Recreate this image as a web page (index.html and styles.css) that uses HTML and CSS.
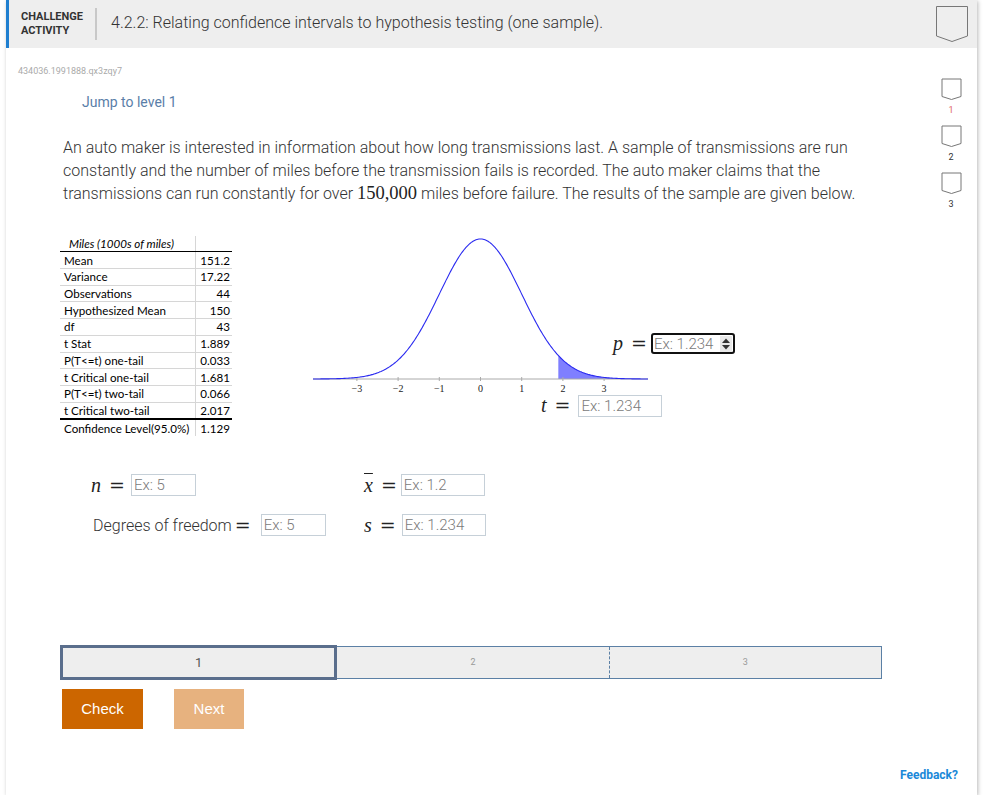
FILE: index.html
```html
<!DOCTYPE html>
<html lang="en">
<head>
    <meta charset="UTF-8">
    <meta name="viewport" content="width=device-width, initial-scale=1.0">
    <title>Challenge Activity 4.2.2</title>
    <link rel="stylesheet" href="styles.css">
</head>
<body>
    <div class="activity">
        <div class="activity-header">
            <div class="activity-label">CHALLENGE<br>ACTIVITY</div>
            <div class="activity-title">4.2.2: Relating confidence intervals to hypothesis testing (one sample).</div>
            <svg class="chevron chevron-big" width="34" height="38" viewBox="0 0 34 38">
                <path d="M1.5 1.5 H32.5 V31 L17 36.5 L1.5 31 Z"/>
            </svg>
        </div>

        <div class="activity-body">
            <div class="main">
                <div class="activity-id">434036.1991888.qx3zqy7</div>
                <div class="jump">Jump to level 1</div>

                <p class="prompt">An auto maker is interested in information about how long transmissions last. A sample of transmissions are run constantly and the number of miles before the transmission fails is recorded. The auto maker claims that the transmissions can run constantly for over <span class="num">150,000</span> miles before failure. The results of the sample are given below.</p>

                <div class="data">
                    <table class="stats">
                        <tr class="head"><td class="title">Miles (1000s of miles)</td><td></td></tr>
                        <tr><td>Mean</td><td>151.2</td></tr>
                        <tr><td>Variance</td><td>17.22</td></tr>
                        <tr><td>Observations</td><td>44</td></tr>
                        <tr><td>Hypothesized Mean</td><td>150</td></tr>
                        <tr><td>df</td><td>43</td></tr>
                        <tr><td>t Stat</td><td>1.889</td></tr>
                        <tr><td>P(T&lt;=t) one-tail</td><td>0.033</td></tr>
                        <tr><td>t Critical one-tail</td><td>1.681</td></tr>
                        <tr><td>P(T&lt;=t) two-tail</td><td>0.066</td></tr>
                        <tr class="thick"><td>t Critical two-tail</td><td>2.017</td></tr>
                        <tr class="last"><td>Confidence Level(95.0%)</td><td>1.129</td></tr>
                    </table>

                    <div class="graph">
                        <div class="graph-top">
                            <svg id="tdist" width="335" height="163" viewBox="0 0 335 163">
                                <path id="shade" class="shade"/>
                                <line class="axis" x1="0" y1="146" x2="335" y2="146"/>
                                <g class="ticks">
                                    <line x1="43.9" y1="144" x2="43.9" y2="148"/>
                                    <line x1="85.1" y1="144" x2="85.1" y2="148"/>
                                    <line x1="126.3" y1="144" x2="126.3" y2="148"/>
                                    <line x1="167.5" y1="144" x2="167.5" y2="148"/>
                                    <line x1="208.7" y1="144" x2="208.7" y2="148"/>
                                    <line x1="249.9" y1="144" x2="249.9" y2="148"/>
                                    <line x1="291.1" y1="144" x2="291.1" y2="148"/>
                                </g>
                                <path id="curve" class="curve"/>
                                <g class="tick-labels">
                                    <text x="43.9" y="159">−3</text>
                                    <text x="85.1" y="159">−2</text>
                                    <text x="126.3" y="159">−1</text>
                                    <text x="167.5" y="159">0</text>
                                    <text x="208.7" y="159">1</text>
                                    <text x="249.9" y="159">2</text>
                                    <text x="291.1" y="159">3</text>
                                </g>
                            </svg>
                            <div class="field p-field">
                                <span class="math"><i>p</i><span class="eq">=</span></span>
                                <span class="spin-box">
                                    <input type="text" class="spin-input" placeholder="Ex: 1.234">
                                    <svg class="spinner" width="12" height="16" viewBox="0 0 12 16">
                                        <path d="M2 7 L6 2.5 L10 7 Z"/>
                                        <path d="M2 9 L6 13.5 L10 9 Z"/>
                                    </svg>
                                </span>
                            </div>
                        </div>
                        <div class="field t-field">
                            <span class="math"><i>t</i><span class="eq">=</span></span>
                            <input type="text" class="answer wide" placeholder="Ex: 1.234">
                        </div>
                    </div>
                </div>

                <div class="fields">
                    <div class="field-col">
                        <div class="field n-field">
                            <span class="math"><i>n</i><span class="eq">=</span></span>
                            <input type="text" class="answer" placeholder="Ex: 5">
                        </div>
                        <div class="field df-field">
                            <span class="text-label">Degrees of freedom</span><span class="math"><span class="eq">=</span></span>
                            <input type="text" class="answer" placeholder="Ex: 5">
                        </div>
                    </div>
                    <div class="field-col">
                        <div class="field x-field">
                            <span class="math"><i class="bar">x</i><span class="eq">=</span></span>
                            <input type="text" class="answer wide" placeholder="Ex: 1.2">
                        </div>
                        <div class="field s-field">
                            <span class="math"><i>s</i><span class="eq">=</span></span>
                            <input type="text" class="answer wide" placeholder="Ex: 1.234">
                        </div>
                    </div>
                </div>

                <div class="levels">
                    <div class="level current">1</div>
                    <div class="level">2</div>
                    <div class="level dashed">3</div>
                </div>

                <div class="buttons">
                    <button type="button" class="btn check">Check</button>
                    <button type="button" class="btn next">Next</button>
                </div>
            </div>

            <div class="sidebar">
                <div class="step">
                    <svg class="chevron" width="21" height="23" viewBox="0 0 21 23">
                        <path d="M1 1 H20 V18.5 L10.5 21.5 L1 18.5 Z"/>
                    </svg>
                    <span class="step-num active">1</span>
                </div>
                <div class="step">
                    <svg class="chevron" width="21" height="23" viewBox="0 0 21 23">
                        <path d="M1 1 H20 V18.5 L10.5 21.5 L1 18.5 Z"/>
                    </svg>
                    <span class="step-num">2</span>
                </div>
                <div class="step">
                    <svg class="chevron" width="21" height="23" viewBox="0 0 21 23">
                        <path d="M1 1 H20 V18.5 L10.5 21.5 L1 18.5 Z"/>
                    </svg>
                    <span class="step-num">3</span>
                </div>
            </div>
        </div>

        <div class="feedback">Feedback?</div>
    </div>

    <script>
        // curve of the t distribution (df = 43, close to normal)
        const cx = 167.5, sx = 41.2, axisY = 146, sy = 351;

        function pdf(t) {
            return Math.exp(-t * t / 2) / Math.sqrt(2 * Math.PI);
        }

        function yAt(px) {
            return axisY - pdf((px - cx) / sx) * sy;
        }

        let d = '';
        for (let px = 0; px <= 335; px++) {
            d += (px ? 'L' : 'M') + px + ' ' + yAt(px).toFixed(2);
        }
        document.getElementById('curve').setAttribute('d', d);

        const start = cx + 1.889 * sx;
        let s = 'M' + start.toFixed(2) + ' ' + axisY + ' L' + start.toFixed(2) + ' ' + yAt(start).toFixed(2);
        for (let px = Math.ceil(start); px <= 335; px++) {
            s += ' L' + px + ' ' + yAt(px).toFixed(2);
        }
        s += ' L335 ' + axisY + ' Z';
        document.getElementById('shade').setAttribute('d', s);
    </script>
</body>
</html>
```

FILE: styles.css
```css
body {
    margin: 0;
    font-family: Roboto, "Liberation Sans", sans-serif;
    color: #333;
    background: #fff;
}
.activity {
    display: flex;
    flex-direction: column;
    height: 795px;
    margin: 0 8px 0 6px;
    box-shadow: 1px 1px 4px rgba(0, 0, 0, 0.28);
}
.activity-header {
    display: flex;
    align-items: center;
    height: 48px;
    padding-left: 12px;
    background: #eeeeee;
    border-left: 3px solid #1f7fd0;
}
.activity-label {
    font-size: 11px;
    font-weight: 700;
    line-height: 14px;
    color: #333;
}
.activity-title {
    margin-left: 12px;
    padding-left: 14px;
    border-left: 2px solid #c8c8c8;
    height: 32px;
    line-height: 30px;
    font-size: 16px;
    font-weight: 300;
    color: #333;
}
.chevron path {
    fill: none;
    stroke: #777;
    stroke-width: 1;
}
.chevron-big {
    margin-left: auto;
    margin-right: 8px;
}
.activity-body {
    flex: 1;
    display: grid;
    grid-template-columns: 1fr 52px;
}
.main {
    padding-left: 12px;
}
.activity-id {
    margin-top: 18px;
    font-size: 9px;
    line-height: 11px;
    color: #aaa;
}
.jump {
    margin: 17px 0 0 64px;
    font-size: 14px;
    line-height: 17px;
    color: #5a7ea8;
}
.prompt {
    width: 820px;
    margin: 26px 0 0 45px;
    font-size: 16px;
    font-weight: 300;
    line-height: 22.8px;
    color: #333;
}
.num {
    font-family: "Liberation Serif", serif;
    font-size: 18.5px;
    font-weight: 400;
    line-height: 1;
    color: #222;
}
.data {
    display: flex;
    align-items: flex-start;
    gap: 81px;
    margin: 28px 0 0 42px;
}
.stats {
    width: 172px;
    margin-top: 3px;
    border-collapse: collapse;
    font-family: Lato, "Open Sans", sans-serif;
    font-size: 11.6px;
    color: #000;
}
.stats td {
    height: 15.7px;
    padding: 0 2px 0 4px;
    line-height: 15px;
    border-bottom: 1px solid #d6d6d6;
    white-space: nowrap;
}
.stats td:last-child {
    width: 30px;
    text-align: right;
    border-left: 1px solid #d6d6d6;
}
.stats .head td {
    height: 15px;
    border-bottom: 1px solid #000;
}
.stats .title {
    padding-left: 9px;
    font-style: italic;
}
.stats .thick td {
    border-bottom: 2px solid #000;
}
.stats .last td {
    border-bottom: none;
}
.graph {
    display: flex;
    flex-direction: column;
}
.graph-top {
    display: flex;
    align-items: flex-end;
}
.axis,
.ticks line {
    stroke: #aaa;
    stroke-width: 1;
}
.curve {
    fill: none;
    stroke: #2b2bf0;
    stroke-width: 1.1;
}
.shade {
    fill: #7f7fff;
}
.tick-labels text {
    font-family: "Liberation Serif", serif;
    font-size: 10px;
    text-anchor: middle;
    fill: #222;
}
.field {
    display: flex;
    align-items: center;
}
.math {
    font-family: "Liberation Serif", serif;
    font-size: 20px;
    color: #222;
}
.math i {
    font-style: italic;
}
.eq {
    margin: 0 3px 0 8px;
    font-family: "DejaVu Serif", serif;
    font-size: 19px;
    font-style: normal;
}
.bar {
    text-decoration: overline;
    text-decoration-thickness: 1px;
}
.p-field {
    margin: 0 0 41px -35px;
}
.p-field .eq {
    margin-right: 4px;
}
.spin-box {
    display: flex;
    align-items: center;
    width: 84px;
    height: 21px;
    box-sizing: border-box;
    border: 2px solid #111;
    border-radius: 3px;
}
.spin-input {
    width: 66px;
    padding: 0 0 0 1px;
    border: none;
    outline: none;
    font-family: Roboto, sans-serif;
    font-size: 15px;
    font-weight: 300;
    background: transparent;
}
.spinner {
    background: #e8e8e8;
}
.spinner path {
    fill: #333;
}
.t-field {
    margin: -2px 0 0 228px;
}
.t-field .eq {
    margin-right: 8px;
}
.answer {
    width: 65px;
    height: 22px;
    padding: 0 2px;
    box-sizing: border-box;
    border: 1px solid #c6d0d8;
    font-family: Roboto, sans-serif;
    font-size: 15px;
    font-weight: 300;
    color: #333;
}
.answer.wide {
    width: 84px;
}
.answer::placeholder,
.spin-input::placeholder {
    color: #7a7a7a;
}
.fields {
    display: flex;
    margin: 38px 0 0 73px;
}
.field-col {
    display: flex;
    flex-direction: column;
    gap: 17px;
}
.field-col:first-child {
    width: 273px;
}
.n-field .eq {
    margin-right: 6px;
}
.df-field {
    margin-left: 2px;
}
.df-field .eq {
    margin: 0 10px 0 3px;
}
.text-label {
    font-size: 16px;
    font-weight: 300;
    color: #333;
}
.x-field .eq {
    margin-right: 4px;
}
.s-field .eq {
    margin-right: 6px;
}
.levels {
    display: flex;
    width: 821px;
    height: 33px;
    margin: 109px 0 0 43px;
    box-sizing: border-box;
    border: 1px solid #5b80a5;
    background: #eeeeee;
}
.level {
    flex: 1;
    display: flex;
    align-items: center;
    justify-content: center;
    font-size: 9px;
    color: #999;
}
.level.current {
    margin: -2px 0 -2px -2px;
    border: 3px solid #5a6e8c;
    font-size: 13px;
    color: #555;
}
.level.dashed {
    border-left: 1px dashed #5b80a5;
}
.buttons {
    display: flex;
    gap: 31px;
    margin: 10px 0 0 44px;
}
.btn {
    height: 40px;
    border: none;
    font-family: "Liberation Sans", Arial, sans-serif;
    font-size: 15px;
    color: #fff;
    cursor: pointer;
}
.check {
    width: 81px;
    background: #cc6600;
}
.next {
    width: 70px;
    background: #e7b27f;
}
.sidebar {
    display: flex;
    flex-direction: column;
    align-items: center;
    gap: 9px;
    padding-top: 30px;
}
.step {
    display: flex;
    flex-direction: column;
    align-items: center;
}
.step-num {
    margin-top: 3px;
    font-size: 9px;
    line-height: 12px;
    color: #333;
}
.step-num.active {
    color: #e06666;
}
.feedback {
    padding: 0 19px 13px 0;
    text-align: right;
    font-size: 12px;
    font-weight: 700;
    line-height: 14px;
    color: #1a88d8;
}
```
